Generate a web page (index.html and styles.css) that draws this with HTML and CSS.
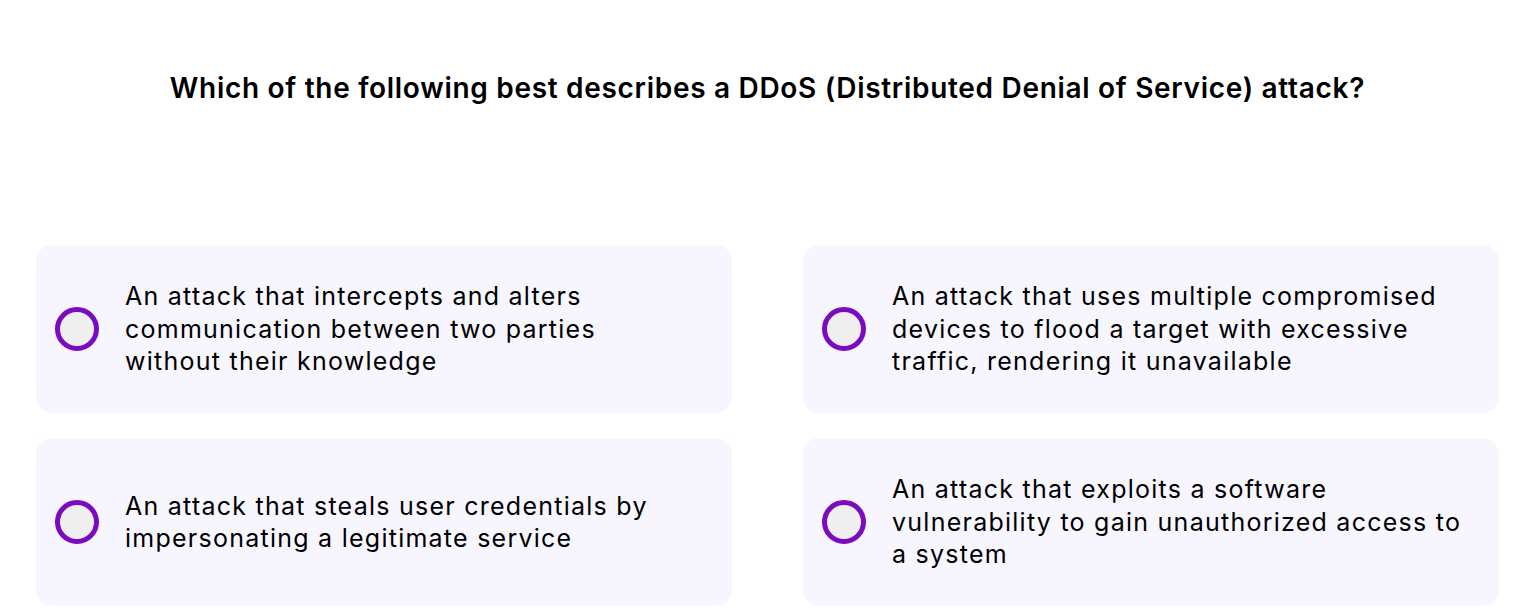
FILE: index.html
```html
<!DOCTYPE html>
<html lang="en">
<head>
    <meta charset="UTF-8">
    <meta name="viewport" content="width=device-width, initial-scale=1.0">
    <title>Quiz</title>
    <link rel="stylesheet" href="styles.css">
</head>
<body>
    <div class="quiz">
        <h1 class="question">Which of the following best describes a DDoS (Distributed Denial of Service) attack?</h1>

        <div class="options">
            <label class="option">
                <span class="radio"></span>
                <span class="option-text">An attack that intercepts and alters communication between two parties without their knowledge</span>
            </label>
            <label class="option">
                <span class="radio"></span>
                <span class="option-text">An attack that uses multiple compromised devices to flood a target with excessive traffic, rendering it unavailable</span>
            </label>
            <label class="option">
                <span class="radio"></span>
                <span class="option-text">An attack that steals user credentials by impersonating a legitimate service</span>
            </label>
            <label class="option">
                <span class="radio"></span>
                <span class="option-text">An attack that exploits a software vulnerability to gain unauthorized access to a system</span>
            </label>
        </div>
    </div>
</body>
</html>
```

FILE: styles.css
```css
body {
    margin: 0;
    background: #fff;
    color: #000;
    font-family: Inter, "Open Sans", sans-serif;
}
.quiz {
    padding: 0 32px 0 36px;
}
.question {
    margin: 0;
    padding-top: 70px;
    height: 245px;
    box-sizing: border-box;
    text-align: center;
    font-size: 28px;
    font-weight: 600;
    line-height: 36px;
    letter-spacing: 0.7px;
}
.options {
    display: grid;
    grid-template-columns: 1fr 1fr;
    column-gap: 71px;
    row-gap: 25px;
}
.option {
    display: flex;
    align-items: center;
    gap: 26px;
    height: 168px;
    box-sizing: border-box;
    padding: 0 36px 0 19px;
    background: #f7f6fe;
    border-radius: 16px;
    cursor: pointer;
}
.radio {
    flex: none;
    width: 44px;
    height: 44px;
    box-sizing: border-box;
    border: 5px solid #7a0bc0;
    border-radius: 50%;
    background: #efefef;
}
.option-text {
    font-size: 25px;
    line-height: 32.5px;
    letter-spacing: 1.25px;
}
```
